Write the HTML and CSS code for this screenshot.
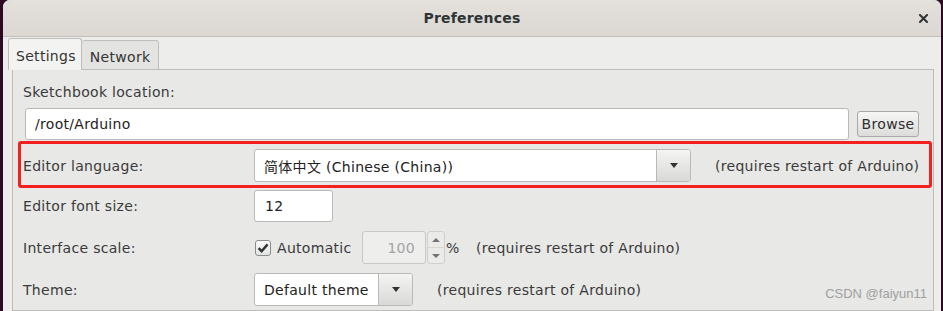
FILE: index.html
```html
<!DOCTYPE html>
<html>
<head>
<meta charset="utf-8">
<title>Preferences</title>
<link rel="stylesheet" href="styles.css">
</head>
<body>
<div class="window">
  <div class="titlebar">
    <span class="title">Preferences</span>
    <svg class="close" width="9" height="9" viewBox="0 0 9 9"><path d="M1 1L8 8M8 1L1 8" stroke="#2e3436" stroke-width="2" stroke-linecap="square"/></svg>
  </div>
  <div class="tabs">
    <div class="tab active">Settings</div>
    <div class="tab inactive">Network</div>
    <div class="tab-fill"></div>
  </div>
  <div class="panel">
    <div class="top-label">Sketchbook location:</div>
    <div class="loc-row">
      <div class="field loc-field">/root/Arduino</div>
      <div class="button">Browse</div>
    </div>
    <div class="row">
      <div class="label">Editor language:</div>
      <div class="combo lang-combo"><span class="combo-text">简体中文 (Chinese (China))</span><span class="combo-btn"><i class="arrow"></i></span></div>
      <span class="note">(requires restart of Arduino)</span>
    </div>
    <div class="row r-font">
      <div class="label">Editor font size:</div>
      <div class="field size-field">12</div>
    </div>
    <div class="row">
      <div class="label">Interface scale:</div>
      <svg class="check" width="16" height="16" viewBox="0 0 16 16">
        <defs><linearGradient id="cb" x1="0" y1="0" x2="0" y2="1"><stop offset="0" stop-color="#fcfcfc"/><stop offset="1" stop-color="#e2e2e1"/></linearGradient></defs>
        <rect x="0.5" y="0.5" width="15" height="15" rx="2.5" fill="url(#cb)" stroke="#8c8c8a"/>
        <path d="M3.6 8.2L6.6 11.2L12.6 4.4" fill="none" stroke="#2e3436" stroke-width="2.4"/>
      </svg>
      <span class="auto">Automatic</span>
      <div class="spin-field">100</div>
      <div class="spin-btns"><span class="spin-up"><i class="up"></i></span><span class="spin-down"><i class="down"></i></span></div>
      <span class="pct">%</span>
      <span class="note-tight">(requires restart of Arduino)</span>
    </div>
    <div class="row">
      <div class="label">Theme:</div>
      <div class="combo theme-combo"><span class="combo-text">Default theme</span><span class="combo-btn"><i class="arrow"></i></span></div>
      <span class="note">(requires restart of Arduino)</span>
    </div>
  </div>
  <div class="highlight"></div>
  <div class="watermark">CSDN @faiyun11</div>
</div>
</body>
</html>
```

FILE: styles.css
```css
html, body {
  margin: 0;
  padding: 0;
}
body {
  background: #2c0b22;
  font-family: "DejaVu Sans", "Noto Sans CJK SC", sans-serif;
  font-size: 14px;
  letter-spacing: 0.3px;
  color: #3a3a3a;
  overflow: hidden;
}
.window {
  position: relative;
  margin-left: 3px;
  width: 938px;
  height: 311px;
  background: #ededec;
  border-radius: 7px 7px 0 0;
  display: flex;
  flex-direction: column;
  overflow: hidden;
}
.titlebar {
  flex: none;
  height: 36px;
  border-bottom: 1px solid #c6bfb8;
  background: linear-gradient(#e4e1dd, #dbd7d3);
  display: grid;
  grid-template-columns: 1fr auto 1fr;
  align-items: center;
}
.title {
  grid-column: 2;
  font-weight: bold;
  color: #2e3436;
  line-height: 20px;
  letter-spacing: 0.2px;
}
.close {
  grid-column: 3;
  justify-self: end;
  margin-right: 13px;
  display: block;
}
.tabs {
  flex: none;
  display: flex;
  align-items: flex-end;
  height: 32px;
  margin: 1px 7px 0 5px;
}
.tab {
  box-sizing: border-box;
  padding: 0 5px 0 7px;
  line-height: 20px;
  border: 1px solid #bdbdbb;
  border-radius: 3px 3px 0 0;
  color: #333;
}
.tab.active {
  height: 32px;
  padding-top: 7px;
  border-bottom: none;
  background: #f3f3f2;
}
.tab.inactive {
  height: 30px;
  padding: 6px 8px 0 8px;
  border-left: none;
  background: #e3e3e2;
}
.tab-fill {
  flex: 1;
  border-bottom: 1px solid #bdbdbb;
}
.panel {
  flex: 1;
  margin: 0 7px 0 9px;
  border: 1px solid #bdbdbb;
  border-top: none;
  background: #e8e8e7;
  padding: 12px 14px 0 10px;
}
.top-label {
  line-height: 20px;
}
.loc-row {
  display: flex;
  align-items: center;
  gap: 8px;
  height: 32px;
  margin: 6px 0 0 2px;
}
.field {
  box-sizing: border-box;
  height: 32px;
  background: #fff;
  border: 1px solid #b9b9b7;
  border-radius: 3px;
  display: flex;
  align-items: center;
  padding-left: 9px;
  color: #222;
}
.loc-field {
  flex: 1;
}
.size-field {
  width: 79px;
  padding-left: 10px;
}
.button {
  box-sizing: border-box;
  flex: none;
  width: 62px;
  height: 26px;
  border: 1px solid #a9a9a7;
  border-radius: 3px;
  background: linear-gradient(#f6f6f5, #dcdcdb);
  display: flex;
  align-items: center;
  justify-content: center;
  color: #2e2e2e;
}
.row {
  display: flex;
  align-items: center;
  height: 33px;
  margin-top: 9px;
}
.row.r-font {
  height: 32px;
  margin-top: 8px;
}
.label {
  flex: none;
  width: 231px;
}
.combo {
  box-sizing: border-box;
  flex: none;
  height: 33px;
  display: flex;
  background: #fff;
  border: 1px solid #b9b9b7;
  border-radius: 3px;
  overflow: hidden;
  color: #222;
}
.lang-combo {
  width: 437px;
}
.theme-combo {
  width: 159px;
}
.combo-text {
  flex: 1;
  padding-left: 9px;
  display: flex;
  align-items: center;
  white-space: nowrap;
}
.combo-btn {
  box-sizing: border-box;
  width: 34px;
  border-left: 1px solid #b9b9b7;
  background: linear-gradient(#f4f4f3, #d9d9d8);
  display: flex;
  align-items: center;
  justify-content: center;
}
.arrow {
  display: block;
  width: 0;
  height: 0;
  border-left: 4.5px solid transparent;
  border-right: 4.5px solid transparent;
  border-top: 5px solid #2e3436;
}
.note {
  margin-left: 24px;
  white-space: nowrap;
}
.note-tight {
  white-space: nowrap;
}
.check {
  display: block;
  flex: none;
  margin-left: 1px;
}
.auto {
  flex: none;
  width: 85px;
  margin-left: 6px;
}
.spin-field {
  box-sizing: border-box;
  flex: none;
  width: 64px;
  height: 33px;
  background: #eeeeed;
  border: 1px solid #c8c8c6;
  border-radius: 3px;
  color: #a3a3a3;
  display: flex;
  align-items: center;
  justify-content: flex-end;
  padding-right: 10px;
}
.spin-btns {
  box-sizing: border-box;
  flex: none;
  width: 18px;
  height: 33px;
  margin-left: 1px;
  border: 1px solid #cfcfcd;
  border-radius: 3px;
  display: flex;
  flex-direction: column;
  background: #ebebea;
}
.spin-up, .spin-down {
  flex: 1;
  display: flex;
  align-items: center;
  justify-content: center;
}
.spin-down {
  border-top: 1px solid #d6d6d4;
}
.up {
  display: block;
  width: 0;
  height: 0;
  border-left: 4px solid transparent;
  border-right: 4px solid transparent;
  border-bottom: 4px solid #737373;
}
.down {
  display: block;
  width: 0;
  height: 0;
  border-left: 4px solid transparent;
  border-right: 4px solid transparent;
  border-top: 4px solid #737373;
}
.pct {
  flex: none;
  width: 30px;
  margin-left: 1px;
}
.highlight {
  position: absolute;
  left: 15px;
  top: 141px;
  width: 914px;
  height: 47px;
  box-sizing: border-box;
  border: 3px solid #f41f1f;
  border-radius: 3px;
}
.watermark {
  position: absolute;
  right: 14px;
  top: 286px;
  font-family: "Liberation Sans", Arial, sans-serif;
  font-size: 13px;
  line-height: 16px;
  letter-spacing: 0;
  color: #a0a0a0;
}
```
